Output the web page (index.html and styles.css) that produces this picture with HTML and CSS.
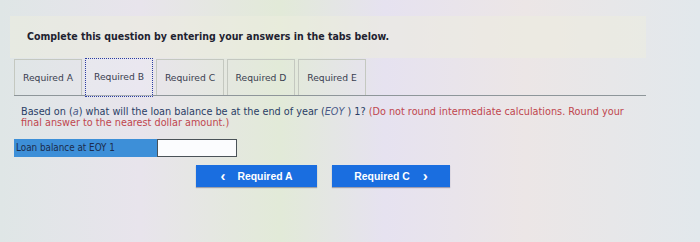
FILE: index.html
```html
<!DOCTYPE html>
<html>
<head>
<meta charset="utf-8">
<link rel="stylesheet" href="styles.css">
</head>
<body>
<div class="page">
  <div class="header">
    <p class="intro">Complete this question by entering your answers in the tabs below.</p>
  </div>
  <div class="tabs">
    <div class="tab">Required A</div>
    <div class="tab active">Required B</div>
    <div class="tab">Required C</div>
    <div class="tab">Required D</div>
    <div class="tab">Required E</div>
  </div>
  <p class="question">Based on (<i>a</i>) what will the loan balance be at the end of year (<i>EOY</i> ) 1? <span class="note">(Do not round intermediate calculations. Round your final answer to the nearest dollar amount.)</span></p>
  <div class="answer">
    <div class="label">Loan balance at EOY 1</div>
    <div class="input"></div>
  </div>
  <div class="nav">
    <div class="btn"><span class="chev">&#8249;</span>Required A</div>
    <div class="btn">Required C<span class="chev right">&#8250;</span></div>
  </div>
</div>
</body>
</html>
```

FILE: styles.css
```css
html, body {
  margin: 0;
  padding: 0;
}
body {
  width: 700px;
  height: 242px;
  overflow: hidden;
  font-family: "DejaVu Sans", Verdana, sans-serif;
  background: linear-gradient(90deg, #dfe6e6 0%, #e8e4ec 20%, #e2ead8 40%, #e6e2f0 55%, #ece6e6 75%, #e2e8ec 100%);
}
.page {
  padding: 16px 0 0 10px;
  width: 636px;
}
.header {
  background: rgba(236, 236, 222, 0.55);
  padding: 14px 0 0 17px;
  height: 28px;
}
.intro {
  margin: 0;
  font-family: "DejaVu Sans Condensed", "DejaVu Sans", sans-serif;
  font-size: 10.5px;
  font-weight: bold;
  color: #1e2230;
}
.tabs {
  display: flex;
  margin-left: 4px;
  margin-top: 0;
  border-bottom: 1px solid #8e969a;
  gap: 3px;
  height: 37px;
  align-items: stretch;
}
.tab {
  width: 68px;
  border: 1px solid #c4c8c0;
  border-bottom: none;
  font-size: 9.2px;
  color: #3a4050;
  display: flex;
  align-items: center;
  justify-content: center;
  box-sizing: border-box;
  margin-top: 1px;
}
.tab.active {
  border: 1px dotted #2a3ca0;
  margin-top: 0;
  height: 39px;
  padding-bottom: 2px;
  background: rgba(240, 240, 250, 0.3);
}
.question {
  margin: 10px 0 0 11px;
  width: 620px;
  font-size: 9.7px;
  line-height: 11px;
  color: #2a3e66;
}
.question i {
  color: #4a5a88;
}
.note {
  color: #c0464e;
}
.answer {
  display: flex;
  margin: 11px 0 0 4px;
  height: 18px;
}
.label {
  width: 143px;
  background: #3d8fd8;
  color: #1c2c4c;
  font-family: "DejaVu Sans Condensed", "DejaVu Sans", sans-serif;
  font-size: 9.8px;
  line-height: 18px;
  padding-left: 2px;
  box-sizing: border-box;
}
.input {
  width: 80px;
  background: #fbfcfe;
  border: 1px solid #4a5258;
  box-sizing: border-box;
}
.nav {
  display: flex;
  gap: 15px;
  margin: 8px 0 0 186px;
}
.btn {
  width: 121px;
  height: 22px;
  background: #1a6ee0;
  color: #ffffff;
  font-family: "Liberation Sans", Arial, sans-serif;
  font-weight: bold;
  font-size: 10.4px;
  display: flex;
  align-items: center;
  justify-content: center;
  box-shadow: 0 1px 1px rgba(0,0,40,0.3);
}
.btn + .btn {
  width: 118px;
}
.chev {
  font-size: 15px;
  margin-right: 12px;
  line-height: 1;
  margin-top: -2px;
}
.chev.right {
  margin-right: 0;
  margin-left: 13px;
}
```
